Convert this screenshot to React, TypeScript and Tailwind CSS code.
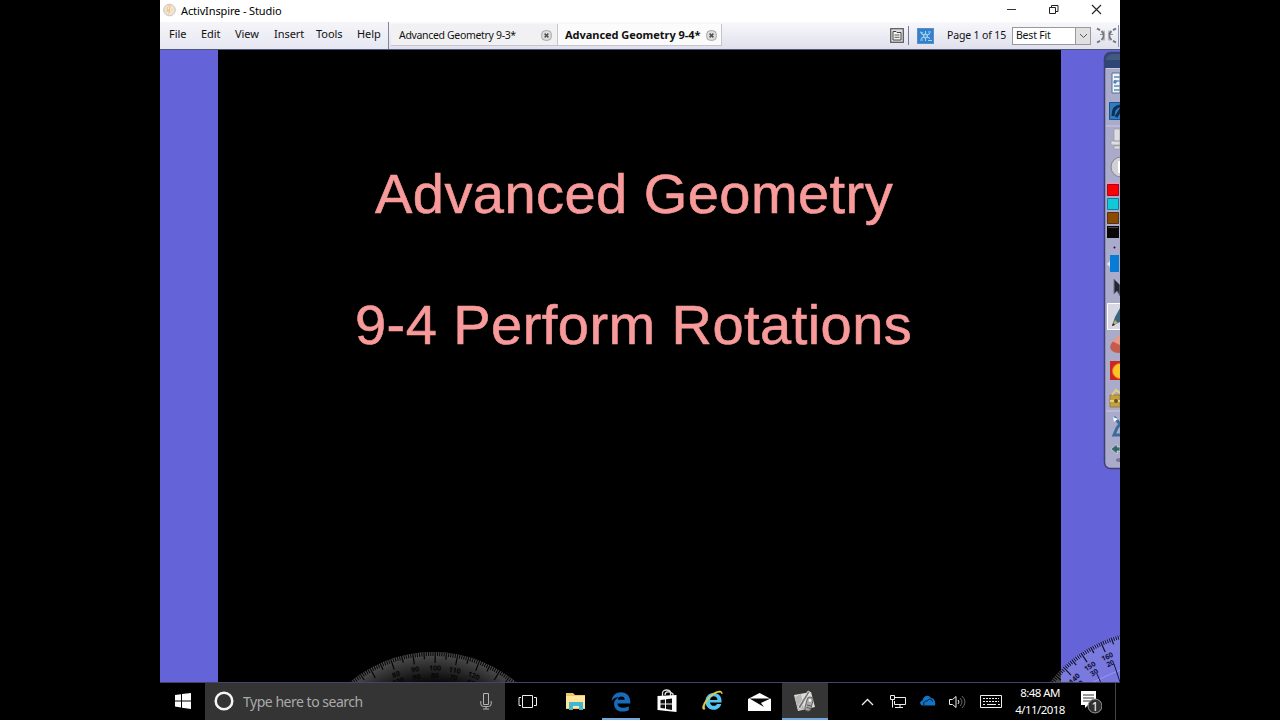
import type { ReactNode } from "react";

const MENU = [
  { label: "File", width: "w-[32px]" },
  { label: "Edit", width: "w-[34px]" },
  { label: "View", width: "w-[39px]" },
  { label: "Insert", width: "w-[42px]" },
  { label: "Tools", width: "w-[41px]" },
  { label: "Help", width: "w-[30px]" },
];

const UI_FONT = "font-['Noto_Sans','Open_Sans',sans-serif]";

function TitleBar() {
  return (
    <header className="flex h-[22px] items-center bg-white pl-[3px] text-black">
      <svg className="-mt-[2px]" width="13" height="14" viewBox="0 0 13 14">
        <circle cx="6.5" cy="7" r="5.8" fill="#f0e3cf" stroke="#c9c4c4" />
        <path d="M5 2.5 3.5 8.5 6 8 5.3 11.5 9.3 5.5 6.7 6 8 2.8z" fill="#e9bd73" />
        <path d="M6.2 3 5 7M8.6 4 7 8.5" stroke="#fff4df" strokeWidth="1" />
      </svg>
      <h1 className="-mt-[2px] ml-[5px] text-[11px] leading-none tracking-[-0.12px]">ActivInspire - Studio</h1>
      <div className="-mt-[4px] ml-auto mr-[18px] flex items-center gap-[32px]">
        <svg width="11" height="11" viewBox="0 0 11 11"><path d="M1 5.5h9" stroke="#333" /></svg>
        <svg width="10" height="11" viewBox="0 0 10 11" fill="none" stroke="#222"><path d="M.5 3.5h6v6h-6zM2.5 3.500v-2h6.500v6h-2.500" /></svg>
        <svg width="11" height="11" viewBox="0 0 11 11"><path d="m1 1 9 9M10 1l-9 9" stroke="#222" strokeWidth="1.1" /></svg>
      </div>
    </header>
  );
}

function CloseDot() {
  return (
    <svg width="11" height="11" viewBox="0 0 11 11">
      <rect x=".7" y=".7" width="9.600" height="9.600" rx="3.500" fill="#dedede" stroke="#a5a5a5" />
      <path d="m3.600 3.600 3.800 3.800M7.400 3.600 3.600 7.400" stroke="#555" strokeWidth="1.500" />
    </svg>
  );
}

function MenuBar() {
  return (
    <div className="flex h-[28px] border-b border-[#4c5878] bg-gradient-to-b from-[#f8f8fb] to-[#dfe0ec] text-[11px] text-[#111]">
      <nav className="flex w-[229px] border-r border-[#81859b] bg-gradient-to-b from-[#f5f5f9] to-[#e6e7f2] pl-[9px] pt-[4px] leading-[15px]">
        {MENU.map((item) => (
          <span key={item.label} className={`${item.width} tracking-[-0.050px]`}>{item.label}</span>
        ))}
      </nav>
      <div className="ml-[2px] mt-[2px] flex h-[22px] w-[167px] items-center border-b border-r border-[#c5c5cb] bg-[#f1f1f3] pl-[8px] text-[10.500px]">
        <span className="whitespace-nowrap pt-[2px] tracking-[-0.330px]">Advanced Geometry 9-3*</span>
        <span className="ml-auto mr-[5px] pt-[2px]"><CloseDot /></span>
      </div>
      <div className="mt-[2px] flex h-[22px] w-[164px] items-center border-b border-r border-[#c5c5cb] bg-[#fbfbfc] pl-[7px] text-[11px] font-bold">
        <span className="whitespace-nowrap pt-[2px] tracking-[-0.040px]">Advanced Geometry 9-4*</span>
        <span className="ml-auto mr-[4px] pt-[2px]"><CloseDot /></span>
      </div>
      <div className="ml-auto flex h-[27px] items-center">
        <svg width="14" height="15" viewBox="0 0 14 15" fill="none">
          <rect x=".7" y=".7" width="12.600" height="13.600" fill="#ddd" stroke="#555" strokeWidth="1.200" />
          <path d="M3 3.500h3l1 1h4v7.500H3z" fill="#f5f5f5" stroke="#444" />
          <path d="M4.500 7h5M4.500 9.300h5" stroke="#555" />
        </svg>
        <span className="ml-[4px] h-[19px] w-px bg-[#7079a0]" />
        <svg className="ml-[8px]" width="17" height="16" viewBox="0 0 17 16">
          <rect width="17" height="16" fill="#367fc9" />
          <rect x=".5" y=".5" width="16" height="15" fill="none" stroke="#5291cd" />
          <path d="M8.500 3v10M4 5.500l9 5M13 5.500l-9 5M3 4l3 1M11 4h3M3 12h3M11 12.500h4" stroke="#9bd4fa" strokeWidth="1.100" />
          <circle cx="8.500" cy="8" r="2" fill="#4c9ee0" stroke="#b4e0fa" />
        </svg>
        <span className="ml-[13px] w-[65px] whitespace-nowrap pt-px text-[10.500px] tracking-[-0.150px]">Page 1 of 15</span>
        <div className="flex h-[18px] w-[79px] items-center border border-[#999] bg-white pl-[3px] text-[10.500px]">
          <span className="whitespace-nowrap pt-px tracking-[-0.200px]">Best Fit</span>
          <span className="ml-auto flex h-full w-[15px] items-center justify-center border-l border-[#999] bg-[#e0e0e0]">
            <svg width="9" height="6" viewBox="0 0 9 6"><path d="m1 1 3.500 3.500L8 1" fill="none" stroke="#555" /></svg>
          </span>
        </div>
        <svg className="ml-[5px]" width="21" height="17" viewBox="0 0 21 17" fill="none" stroke="#72767e" strokeWidth="2">
          <path d="m1 1.500 3 1.700M1 15.500l3-1.700M20 1.500l-3 1.700M20 15.500l-3-1.700" />
          <path d="M5.500 4Q10 8.500 5.500 13M15.500 4Q11 8.500 15.500 13" strokeWidth="1.800" />
          <path d="M8 3.500v4H4M8 13.500v-4M13 3.500v4h4M13 13.500v-4" strokeWidth=".8" />
        </svg>
        <span className="ml-px mr-px h-[22px] w-px bg-[#8993b5]" />
      </div>
    </div>
  );
}

type ProtractorProps = { cx: number; cy: number; offset: number; ink: string; fill: string; from: number; to: number; labels: number[] };

// Tick marks are one degree apart; labels sit every ten degrees.
function Protractor({ cx, cy, offset, ink, fill, from, to, labels }: ProtractorProps) {
  const ticks = Array.from({ length: to - from + 1 }, (_, i) => from + i);
  return (
    <g transform={`translate(${cx} ${cy})`}>
      <circle r="130" fill={fill} />
      {ticks.map((deg) => (
        <path key={deg} d={`M0-130V${deg % 10 === 0 ? -119 : deg % 5 === 0 ? -123 : -126}`} transform={`rotate(${deg - 100 + offset})`} stroke={ink} strokeWidth={deg % 5 === 0 ? 1.2 : 1} />
      ))}
      {labels.map((deg) => (
        <g key={deg} transform={`rotate(${deg - 100 + offset})`} fill={ink} fontSize="7" fontWeight="bold" textAnchor="middle">
          <text y="-111.500">{deg}</text>
          <text y="-104">{180 - deg}</text>
        </g>
      ))}
    </g>
  );
}

function Toolbox() {
  return (
    <svg className="absolute right-0 top-[1px]" width="17" height="420" viewBox="1103 51 17 420">
      <rect x="1104.500" y="52.500" width="40" height="416" rx="6" fill="#aaaacb" stroke="#3e3e70" strokeWidth="1.500" />
      <path d="M1105 68V58q0-5 6-5h9v15z" fill="#2e4674" />
      <path d="M1106 60q1-6 7-6h7v6z" fill="#425a7e" />
      <path d="M1106 68.500h14M1106 126h14M1106 411h14" stroke="#c9c9e1" />
      {/* page browser */}
      <path d="M1112 73h8v20h-8z" fill="#eef3f8" stroke="#526f93" />
      <path d="M1114 77h6M1114 81h6M1114 86h6M1114 90h6" stroke="#668bb1" strokeWidth="1.500" />
      <circle cx="1115" cy="82" r="1.700" fill="#467fc4" />
      {/* profile switch */}
      <path d="M1109.500 102.500h12v17h-12z" fill="#317cbd" stroke="#175494" />
      <path d="M1113 116q0-10 8-10M1116 117l5-8" fill="none" stroke="#122e54" strokeWidth="3" />
      <path d="M1114 129h6v12h-6zM1111 141h9v4h-9zM1114 146h6v3h-6z" fill="#dedee2" stroke="#99999e" strokeWidth=".7" />
      <circle cx="1121" cy="167" r="10" fill="#d0d0d5" stroke="#85858e" />
      <path d="M1118 161h2v12h-2z" fill="#fff" />
      {/* pen colours */}
      <path d="M1106 183h14" stroke="#ff91b5" />
      <path d="M1107.500 184.500h11v11h-11z" fill="#fa0000" stroke="#ae0020" />
      <path d="M1107.500 198.500h11v11h-11z" fill="#12c9d7" stroke="#187a9b" />
      <path d="M1107.500 212.500h11v11h-11z" fill="#8a4b00" stroke="#542f1c" />
      <path d="M1107 226h12v12h-12z" fill="#080808" />
      <path d="M1108 227.500h10" stroke="#55433b" />
      <circle cx="1114.500" cy="247.500" r="1" fill="#151528" />
      <path d="M1110 255h9v17h-9z" fill="#087bd5" />
      <path d="m1110 261-3 3 3 3z" fill="#d4efff" />
      <path d="M1114 279v15l3-3 3 5v-11z" fill="#242733" stroke="#717684" />
      {/* selected pen */}
      <path d="M1107.500 303.500h13v26h-13z" fill="#d8d8e4" stroke="#fff" />
      <path d="m1112 326 3-9 5-9v14z" fill="#3b657a" />
      <path d="m1112 326 3-6 3 3z" fill="#c5a375" />
      <path d="m1112 326 1-3 2 2z" fill="#222" />
      {/* eraser, fill, shapes and objects */}
      <path d="M1110 347q1-6 10-11v17q-9 0-10-6z" fill="#c55c50" />
      <path d="m1112 341 8-6v10z" fill="#e69b86" />
      <path d="M1110 361h10v19h-10z" fill="#cd2424" />
      <circle cx="1120" cy="371" r="7.500" fill="#fac426" stroke="#ec7526" />
      <path d="M1110 395h10v12h-10z" fill="#c5a03f" stroke="#92803c" />
      <path d="m1112 395 4-5 4 3M1110 401h10" fill="none" stroke="#e5d174" strokeWidth="2" />
      <circle cx="1116" cy="401" r="2" fill="#665329" />
      <path d="m1114 417 6 7-3 4-3 7h6" fill="none" stroke="#3b6d9b" strokeWidth="3" />
      <path d="m1113 417 5 2-4 3z" fill="#fff" />
      <path d="m1111 449 6-5v3h3v4h-3v3z" fill="#356565" stroke="#dce8ed" strokeWidth=".6" />
      <ellipse cx="1120" cy="460" rx="4" ry="2" fill="#777794" />
    </svg>
  );
}

function Flipchart() {
  return (
    <main className="relative flex h-[633px] justify-center overflow-hidden bg-[#6464d8] pr-px">
      <section className="h-full w-[843px] bg-black pl-[137px] pt-[114px] font-['Liberation_Sans',Arial,sans-serif] text-[56px] leading-[60px] text-[#f99a9a] [-webkit-text-stroke:0.600px_#f99a9a]">
        <p className="whitespace-nowrap pl-[20px] tracking-[0.450px]">Advanced Geometry</p>
        <p className="mt-[71px] whitespace-nowrap tracking-[0.450px]">9-4 Perform Rotations</p>
      </section>
      <svg className="absolute inset-0" width="960" height="633" viewBox="160 50 960 633">
        <defs>
          <radialGradient id="dark" gradientUnits="userSpaceOnUse" cx="0" cy="0" r="130">
            <stop offset=".76" stopColor="#050505" />
            <stop offset=".9" stopColor="#303030" />
            <stop offset="1" stopColor="#505050" />
          </radialGradient>
          <linearGradient id="light" x1="0" y1="0" x2="1" y2="1">
            <stop stopColor="#8585dc" />
            <stop offset=".25" stopColor="#7777df" />
            <stop offset="1" stopColor="#6868db" />
          </linearGradient>
          <clipPath id="page"><path d="M160 50h901v633H160z" /></clipPath>
          <clipPath id="desk"><path d="M1061 50h59v633h-59z" /></clipPath>
        </defs>
        <Protractor cx={433} cy={782} offset={1} ink="#050505" fill="url(#dark)" from={50} to={150} labels={[80, 90, 100, 110, 120]} />
        <g clipPath="url(#page)"><Protractor cx={1153.6} cy={760.7} offset={-84} ink="#000" fill="#474747" from={110} to={200} labels={[]} /></g>
        <g clipPath="url(#desk)">
          <Protractor cx={1153.6} cy={760.7} offset={-84} ink="#101032" fill="url(#light)" from={110} to={200} labels={[140, 150, 160]} />
          <path d="m1093 682 27-12" stroke="#9999ee" />
          <path d="m1097 674 4 9M1114 664l6 18" stroke="#17173d" />
        </g>
        <path d="M160 682.500h960" stroke="#484469" />
      </svg>
      <Toolbox />
    </main>
  );
}

function TaskButton({ children, className = "" }: { children: ReactNode; className?: string }) {
  return <div className={`relative flex h-full w-[46px] shrink-0 items-center justify-center ${className}`}>{children}</div>;
}

function PinnedApps() {
  return (
    <div className="flex">
      <TaskButton>
        <svg width="20" height="15" viewBox="0 0 20 15" fill="none" stroke="#eee"><path d="M4.500 1.500h10v12h-10zM3 3.500H1v8h2M16 3.500h2.500v8H16" /></svg>
      </TaskButton>
      <TaskButton>
        <svg className="-mt-[2px] ml-[2px]" width="21" height="18" viewBox="0 0 21 18">
          <path d="M1 1h7l2 2h10v14H1z" fill="#efc769" />
          <path d="M1 4h19v12H1z" fill="#ffe49a" />
          <path d="M4 10h14v8h-4v-4H8v4H4z" fill="#43b5cf" />
        </svg>
      </TaskButton>
      <TaskButton>
        <svg className="ml-[2px]" width="20" height="20" viewBox="0 0 20 20">
          <path d="M.5 9C1.300 3.500 5 .3 10 .3c6 0 9.600 4.300 9.400 11.200H6.500c.2 4.700 6.800 5.400 11.300 2.800v4C11.700 21 3.200 19.800 3.100 12.300 3 8.500 5.600 6 8.600 5 5 5 2.300 6.300.5 9Zm6.200-1.200h7c0-2.300-1.300-3.300-3.400-3.300-2 0-3.300 1.200-3.600 3.300Z" fill="#176bba" />
        </svg>
        <span className="absolute bottom-0 left-[5px] h-[2px] w-[38px] bg-[#75a6d9]" />
      </TaskButton>
      <TaskButton>
        <svg className="-mt-[1px] ml-[2px]" width="21" height="24" viewBox="0 0 21 24">
          <path d="M5.500 7V4c0-4 8-4 8 0v4M8 6c0-4 5-4 8-1v3" fill="none" stroke="#ddd" strokeWidth="1.300" />
          <path d="m.5 7 19-1v17l-19-2z" fill="#fff" />
          <path d="m3.500 11 4.500-.6v4H3.500zM9 10.300l6-.8v5H9zM3.500 15.500H8v4l-4.500-.6zM9 15.500h6V21l-6-1z" fill="#111" />
        </svg>
      </TaskButton>
      <TaskButton>
        <svg className="-mt-[2px] ml-[2px]" width="22" height="22" viewBox="0 0 22 22">
          <path d="M3.500 12C3 7 7 2.500 12 3c5.500.4 8 4.300 7.500 9.500H8c.4 4 5.800 4.300 7 1.500h4.300C17.500 22 4 22 3.500 12Zm4.600-2h7.400c-.3-5-7-4.700-7.400 0Z" fill="#56c5ed" />
          <path d="M3 19c-5 2-1.500-8 5-13C13 1 21-1 20 4c-.5-3-5-2-9 1C5 9 1 16 3 19Z" fill="#e5c950" stroke="#e5c950" strokeWidth=".7" />
        </svg>
      </TaskButton>
      <TaskButton>
        <svg className="ml-[2px]" width="23" height="18" viewBox="0 0 23 18">
          <path d="M0 6 11.500 0 23 6v12H0z" fill="#fff" />
          <path d="M1.500 5.500h21L13 10l3 4z" fill="#080808" />
        </svg>
      </TaskButton>
      <TaskButton className="ml-px bg-[#353535]">
        <svg width="24" height="23" viewBox="0 0 24 23">
          <path d="m1 5 17-3 4 15-17 4z" fill="#dddeda" />
          <path d="M2 7 8 4l3 15-6 1z" fill="#b4b6b2" />
          <path d="m5 17 10-16 2 1-10 17z" fill="#777" stroke="#f4f4f4" strokeWidth=".7" />
          <rect x="13" y="7" width="6" height="14" rx="3" fill="#aaa" stroke="#666" transform="rotate(15 16 14)" />
          <path d="m14 15 4 1M13.500 17.500l4 1" stroke="#555" />
          <circle cx="17" cy="10.500" r="1.400" fill="#f4f4f4" />
        </svg>
        <span className="absolute inset-x-0 bottom-0 h-[2px] bg-[#75a6d9]" />
      </TaskButton>
    </div>
  );
}

function SystemTray() {
  return (
    <div className="ml-auto flex items-center">
      <svg width="13" height="8" viewBox="0 0 13 8" fill="none" stroke="#eee" strokeWidth="1.300"><path d="m1 7 5.500-5.500L12 7" /></svg>
      <svg className="ml-[16px] mt-px" width="16" height="14" viewBox="0 0 16 14" fill="none" stroke="#eee"><path d="M5 2.500h10.500v7h-11V6M10 9.500v3M5 12.500h8M.5.500h4v4h-4zM2.500 4.500v8" /></svg>
      <svg className="-mt-[2px] ml-[14px]" width="16" height="11" viewBox="0 0 16 11">
        <path d="M3 10.500C-1 10-.5 6 2.500 5.500 3 1 8.500-1 11 3c3-.5 5 4 4 7.500z" fill="#1174c4" />
        <path d="M4 10C3 7 5 5.500 7 6.200 9 3 12 4 12.500 6.500" fill="none" stroke="#061a2d" />
      </svg>
      <svg className="ml-[13px]" width="17" height="14" viewBox="0 0 17 14" fill="none" stroke="#eee"><path d="M.5 4.500h3L7 1.500v11L3.500 9.500h-3zM9 5q2 2 0 4" /><path d="M11 3q4 4 0 8M13 1q6 6 0 12" stroke="#666" /></svg>
      <svg className="-mt-px ml-[14px]" width="22" height="13" viewBox="0 0 22 13" fill="none" stroke="#eee">
        <path d="M.5.500h21v12H.5z" />
        <path d="M3 3.500h16M3 6.500h16" strokeDasharray="2 1" />
        <path d="M3 9.500h2M7 9.500h9M18 9.500h2" />
      </svg>
      <div className="-mt-[2px] flex w-[76px] flex-col items-center text-[11.500px] leading-[17px] tracking-[-0.550px] text-white">
        <span>8:48 AM</span>
        <span>4/11/2018</span>
      </div>
      <svg className="mt-px" width="24" height="24" viewBox="0 0 24 24">
        <path d="M3 1h15v14H10l-3 3v-3H3z" fill="#fff" />
        <path d="M5 5h11M5 8h11M5 11h8" stroke="#333" />
        <circle cx="17" cy="16" r="7" fill="#303030" stroke="#999" />
        <text x="17" y="20.500" fill="#fff" fontSize="12" textAnchor="middle">1</text>
      </svg>
      <span className="ml-[13px] mr-[4px] h-[37px] w-px bg-[#444]" />
    </div>
  );
}

function Taskbar() {
  return (
    <footer className="flex h-[37px] bg-black">
      <div className="flex w-[45px] items-center justify-center">
        <svg className="-mt-[2px]" width="16" height="16" viewBox="0 0 16 16"><path d="m0 2 6-.8v6.200H0zM7 1l9-1v7.400H7zM0 8.400h6v6L0 13.600zM7 8.400h9V16l-9-1.300z" fill="#fff" /></svg>
      </div>
      <div className="flex w-[300px] items-center bg-[#343434] px-[9px]">
        <svg className="-mt-px" width="20" height="20" viewBox="0 0 20 20"><circle cx="10" cy="10" r="8.300" fill="none" stroke="#f5f5f5" strokeWidth="2.500" /></svg>
        <span className="ml-[9px] text-[14px] tracking-[-0.480px] text-[#aaa]">Type here to search</span>
        <svg className="-mt-px ml-auto mr-[4px]" width="12" height="17" viewBox="0 0 12 17" fill="none" stroke="#b5b5b5"><path d="M3.500.500h5v11h-5zM.8 8v3q0 2.500 3 2.500h4.400q3 0 3-2.500V8M6 13.500V16M3 16h6" /></svg>
      </div>
      <PinnedApps />
      <SystemTray />
    </footer>
  );
}

export default function App() {
  return (
    <div className={`flex h-[720px] w-[1280px] justify-center overflow-hidden bg-black ${UI_FONT}`}>
      <div className="flex w-[960px] flex-col">
        <TitleBar />
        <MenuBar />
        <Flipchart />
        <Taskbar />
      </div>
    </div>
  );
}
